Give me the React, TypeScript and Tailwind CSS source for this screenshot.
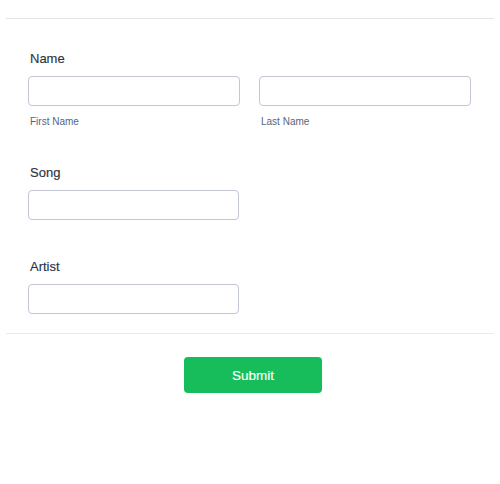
export default function App() {
  return (
    <div className="w-[500px] h-[484px] bg-white font-['Liberation_Sans',Arial,sans-serif] px-[6px] pt-[18px]">
      <div className="border-t border-[#e3e5ea]" />
      <div className="px-[22px]">
        {/* Name */}
        <div className="pt-[29px]">
          <div className="pt-[1px] pl-[2px] text-[13px] leading-[20px] text-[#2c3345] [-webkit-text-stroke:0.15px]">Name</div>
          <div className="mt-[7px] flex gap-[19px]">
            <div className="w-[212px]">
              <input className="block w-full h-[30px] rounded-[4px] border border-[#c3c6d4] bg-white" />
              <div className="mt-[9px] pl-[2px] text-[10px] leading-[14px] text-[#57647e]">First Name</div>
            </div>
            <div className="w-[212px]">
              <input className="block w-full h-[30px] rounded-[4px] border border-[#c3c6d4] bg-white" />
              <div className="mt-[9px] pl-[2px] text-[10px] leading-[14px] text-[#57647e]">Last Name</div>
            </div>
          </div>
        </div>

        {/* Song */}
        <div className="pt-[33px]">
          <div className="pt-[1px] pl-[2px] text-[13px] leading-[20px] text-[#2c3345] [-webkit-text-stroke:0.15px]">Song</div>
          <input className="mt-[7px] block w-[211px] h-[30px] rounded-[4px] border border-[#c3c6d4] bg-white" />
        </div>

        {/* Artist */}
        <div className="pt-[36px]">
          <div className="pt-[1px] pl-[2px] text-[13px] leading-[20px] text-[#2c3345] [-webkit-text-stroke:0.15px]">Artist</div>
          <input className="mt-[7px] block w-[211px] h-[30px] rounded-[4px] border border-[#c3c6d4] bg-white" />
        </div>
      </div>

      <div className="mt-[19px] border-t border-[#e9ebef]" />

      <div className="flex justify-center pt-[23px]">
        <button className="w-[138px] h-[36px] pt-[2px] rounded-[4px] bg-[#18bd5b] text-white text-[13.5px] ml-[6px] [-webkit-text-stroke:0.15px]">
          Submit
        </button>
      </div>
    </div>
  );
}
